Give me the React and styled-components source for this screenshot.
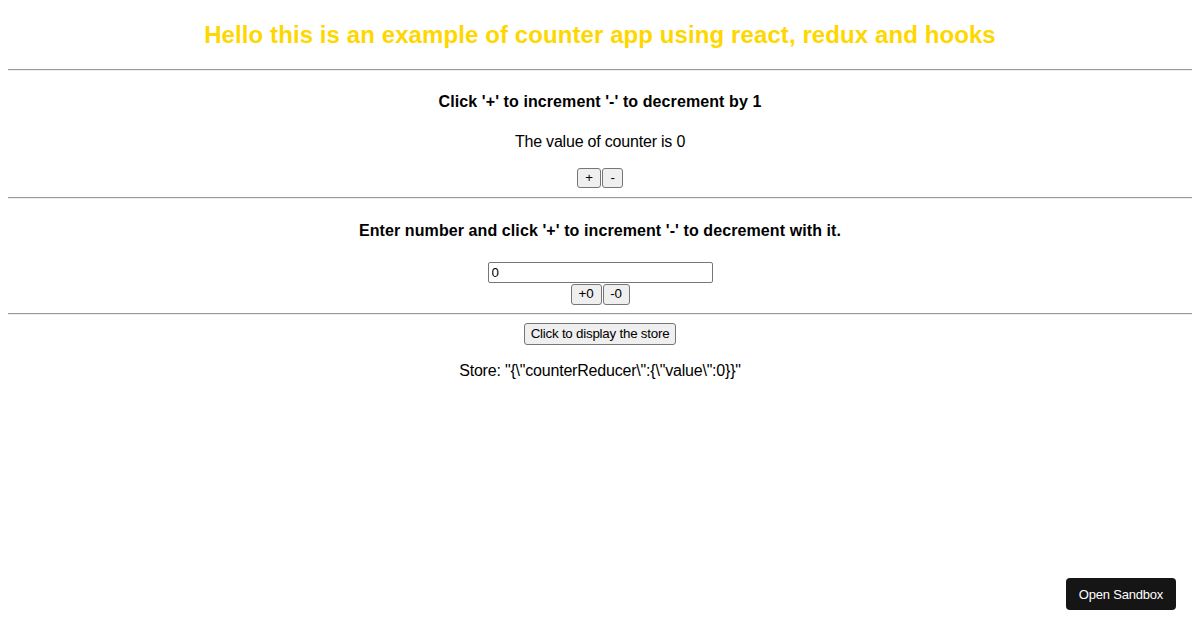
import React, { useState } from 'react';
import styled, { createGlobalStyle } from 'styled-components';

const GlobalStyle = createGlobalStyle`
  body {
    margin: 0;
    background: #fff;
    font-family: "Liberation Sans", Arial, sans-serif;
    color: #000;
  }
`;

const Page = styled.div`
  padding: 0 8px;
  text-align: center;
`;

const Title = styled.h2`
  margin: 21px 0 20px;
  font-size: 24px;
  font-weight: bold;
  line-height: 27.6px;
  letter-spacing: 0.09px;
  color: #ffd700;
`;

const Rule = styled.hr`
  margin: 0;
  border: 0;
  border-top: 1px solid #9a9a9a;
  border-bottom: 1px solid #eeeeee;
`;

const Section = styled.section`
  display: flex;
  flex-direction: column;
  align-items: center;
  padding: ${({ $pad }) => $pad || '0'};
`;

const Heading = styled.h4`
  margin: ${({ $margin }) => $margin || '0'};
  font-size: 16px;
  font-weight: bold;
  line-height: 18.4px;
  letter-spacing: 0.09px;
`;

const Text = styled.p`
  margin: ${({ $margin }) => $margin || '0'};
  font-size: 16px;
  line-height: 18.4px;
  letter-spacing: -0.2px;
`;

const ButtonRow = styled.div`
  display: flex;
  gap: 1px;
`;

const Button = styled.button`
  font-family: "Liberation Sans", Arial, sans-serif;
  font-size: 13.33px;
  line-height: 16px;
  letter-spacing: -0.22px;
  height: ${({ $h }) => $h || '20px'};
  min-width: ${({ $w }) => $w || 'auto'};
  padding: 1px 6px;
  background: #efefef;
  border: 1px solid #767676;
  border-radius: 3px;
  color: #000;
  cursor: pointer;
`;

const NumberInput = styled.input`
  box-sizing: border-box;
  width: 225px;
  height: 21px;
  padding: 1px 3px;
  font-family: "Liberation Sans", Arial, sans-serif;
  font-size: 13.33px;
  border: 1px solid #767676;
  border-radius: 2px;
  margin-bottom: 1px;
`;

const SandboxButton = styled.button`
  position: fixed;
  right: 24px;
  bottom: 20px;
  width: 110px;
  height: 32px;
  background: #151515;
  color: #fff;
  border: 0;
  border-radius: 4px;
  font-family: "Liberation Sans", Arial, sans-serif;
  font-size: 13px;
  letter-spacing: -0.2px;
`;

export default function App() {
  const [value, setValue] = useState(0);
  const [step, setStep] = useState(0);
  const store = JSON.stringify(JSON.stringify({ counterReducer: { value } }));

  return (
    <>
      <GlobalStyle />
      <Page>
        <Title>Hello this is an example of counter app using react, redux and hooks</Title>
        <Rule />
        <Section $pad="0 0 9px">
          <Heading $margin="22px 0 22px">Click '+' to increment '-' to decrement by 1</Heading>
          <Text $margin="0 0 17px">The value of counter is {value}</Text>
          <ButtonRow>
            <Button $w="24px" onClick={() => setValue(value + 1)}>+</Button>
            <Button $w="21px" onClick={() => setValue(value - 1)}>-</Button>
          </ButtonRow>
        </Section>
        <Rule />
        <Section $pad="0 0 8px">
          <Heading $margin="23px 0 21px">Enter number and click '+' to increment '-' to decrement with it.</Heading>
          <NumberInput
            type="text"
            value={step}
            onChange={(e) => setStep(Number(e.target.value) || 0)}
          />
          <ButtonRow>
            <Button $h="21px" $w="31px" onClick={() => setValue(value + step)}>+{step}</Button>
            <Button $h="21px" $w="27px" onClick={() => setValue(value - step)}>-{step}</Button>
          </ButtonRow>
        </Section>
        <Rule />
        <Section $pad="8px 0 0">
          <Button $h="22px">Click to display the store</Button>
          <Text $margin="17px 0 0">Store: {store}</Text>
        </Section>
      </Page>
      <SandboxButton>Open Sandbox</SandboxButton>
    </>
  );
}
